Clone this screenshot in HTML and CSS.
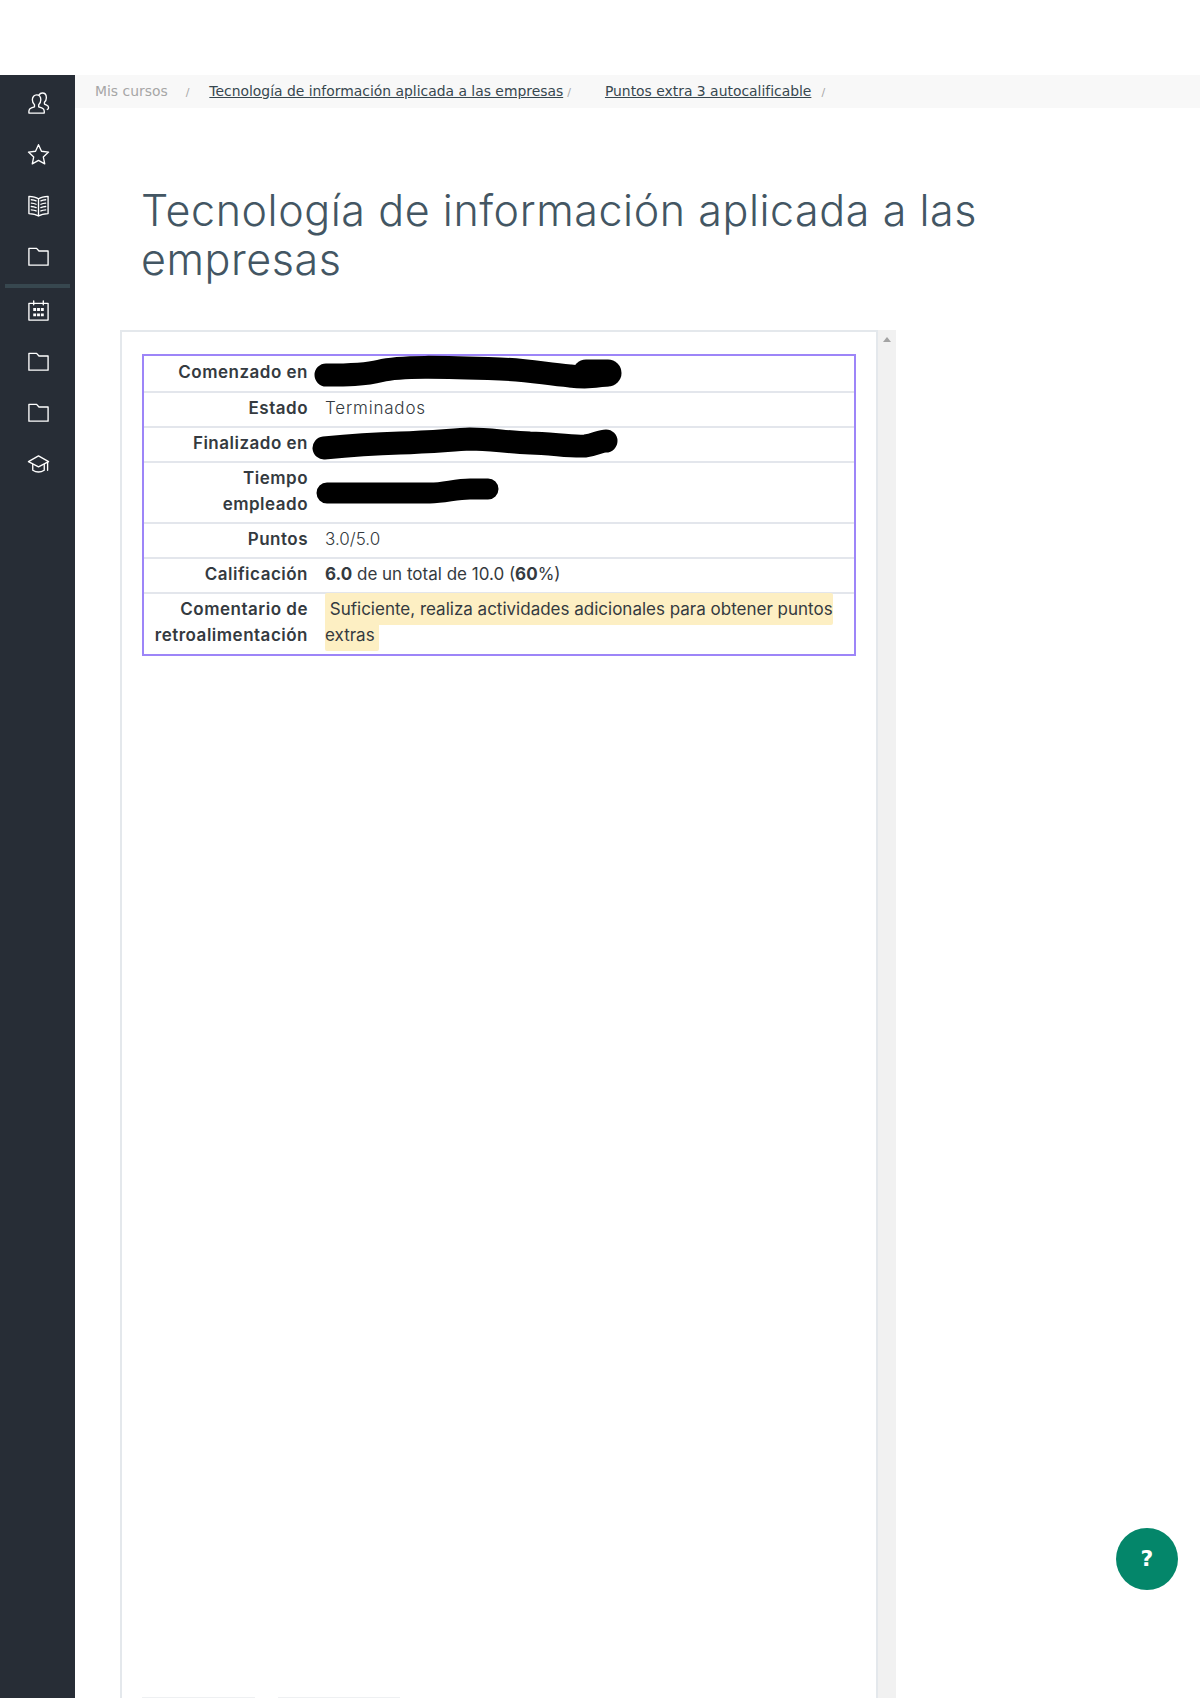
FILE: index.html
```html
<!DOCTYPE html>
<html lang="es">
<head>
<meta charset="utf-8">
<title>Tecnología de información aplicada a las empresas</title>
<link rel="stylesheet" href="styles.css">
</head>
<body>
<div class="topbar"></div>
<div class="shell">
  <nav class="sidebar">
    <div class="navgroup first">
      <a class="navitem"><svg class="ico" viewBox="0 0 24 24"><path d="M2 22v-2.2c0-1.6 1-2.6 2.6-3.2l3.2-1.2v-2.2c-1.5-1.2-2.2-3-2.2-5C5.600 4.900 7.600 3 10 3s4.400 1.900 4.400 5.200c0 2-.7 3.800-2.200 5v2.200l3.200 1.200c1.600.6 2.600 1.600 2.600 3.200V22z"/><path d="M12.500 3.200C13.200 1.900 14.500 1 16 1c2.300 0 4.200 1.800 4.200 4.900 0 1.900-.7 3.500-2 4.700v2l2.300 1c1.300.6 2 1.500 2 2.800 0 1-.5 1.600-1.300 1.800"/></svg></a>
      <a class="navitem"><svg class="ico" viewBox="0 0 24 24"><path d="M12 1.800l3.100 6.800 7.400.9-5.500 5 1.500 7.300-6.500-3.700-6.500 3.700L7 14.500l-5.500-5 7.400-.9z"/></svg></a>
      <a class="navitem"><svg class="ico" viewBox="0 0 24 24"><path d="M12 5C9.500 3.400 6 2.600 2 2.400v18c4 .2 7.500 1 10 2.600 2.500-1.600 6-2.400 10-2.600v-18C18 2.600 14.500 3.400 12 5zM12 5v18"/><path d="M4.500 6c1.800.1 3.600.5 5 1.200M4.500 9.500c1.800.1 3.600.5 5 1.200M4.500 13c1.800.1 3.600.5 5 1.200M4.500 16.500c1.800.1 3.600.5 5 1.200M19.500 6c-1.800.1-3.600.5-5 1.200M19.500 9.500c-1.800.1-3.600.5-5 1.200M19.500 13c-1.800.1-3.600.5-5 1.200M19.500 16.500c-1.800.1-3.600.5-5 1.200"/></svg></a>
      <a class="navitem"><svg class="ico" viewBox="0 0 24 24"><path d="M2 3.500h8l2.500 2.800H22V21H2z"/></svg></a>
    </div>
    <div class="navsep"></div>
    <div class="navgroup second">
      <a class="navitem"><svg class="ico" viewBox="0 0 24 24"><path d="M2 4.500h20V22H2zM7 2v4M17 2v4"/><path class="dots" d="M6.500 9.500h3v3h-3zM10.500 9.500h3v3h-3zM14.500 9.500h3v3h-3zM6.500 15h3v3h-3zM10.500 15h3v3h-3zM14.500 15h3v3h-3z"/></svg></a>
      <a class="navitem"><svg class="ico" viewBox="0 0 24 24"><path d="M2 3.500h8l2.500 2.800H22V21H2z"/></svg></a>
      <a class="navitem"><svg class="ico" viewBox="0 0 24 24"><path d="M2 3.500h8l2.500 2.800H22V21H2z"/></svg></a>
      <a class="navitem"><svg class="ico" viewBox="0 0 24 24"><path d="M12 4L1.500 10 12 15.500 22.500 10z"/><path d="M6 13v6c3.500 2.200 8.500 2.200 12 0v-6M21.500 10.500V19"/></svg></a>
    </div>
  </nav>
  <main class="main">
    <div class="crumbs">
      <span class="crumb muted">Mis cursos</span>
      <span class="slash s1">/</span>
      <a class="crumb link">Tecnología de información aplicada a las empresas</a>
      <span class="slash s2">/</span>
      <a class="crumb link l2">Puntos extra 3 autocalificable</a>
      <span class="slash s3">/</span>
    </div>
    <h1 class="title">Tecnología de información aplicada a las empresas</h1>
    <div class="framewrap">
      <div class="frame">
        <div class="summary">
          <table class="review">
            <tr class="r-first"><th>Comenzado en</th><td></td></tr>
            <tr><th>Estado</th><td class="light wide">Terminados</td></tr>
            <tr><th>Finalizado en</th><td></td></tr>
            <tr class="r-tall"><th>Tiempo<br>empleado</th><td></td></tr>
            <tr><th>Puntos</th><td class="light">3.0/5.0</td></tr>
            <tr><th>Calificación</th><td><b>6.0</b> de un total de 10.0 (<b>60</b>%)</td></tr>
            <tr class="r-last"><th>Comentario de<br>retroalimentación</th><td><span class="note">&nbsp;Suficiente, realiza actividades adicionales para obtener puntos<br>extras&nbsp;</span></td></tr>
          </table>
          <svg class="redact" viewBox="142 354 713 301" aria-hidden="true">
            <path class="s" d="M326 376C345 376 365 376 380 372C400 367 440 368 500 370C530 371 545 375 570 377C585 379 595 378 606 376"/>
            <path class="b" d="M586 374h22"/>
            <path class="s" d="M324 449C345 447 370 445 400 444C430 443 450 441 470 440C490 440 505 443 530 444C550 444 570 448 585 447C595 446 600 442 606 442"/>
            <path class="t" d="M327 494H430C445 494 455 490 470 490H488"/>
          </svg>
        </div>
        <div class="bottomrow"><span class="stub one"></span><span class="stub two"></span></div>
      </div>
      <div class="scrollbar"><span class="arrow"></span></div>
    </div>
  </main>
</div>
<button class="help" type="button">?</button>
</body>
</html>
```
FILE: styles.css
```css
* { box-sizing: border-box; }
html, body { margin: 0; padding: 0; height: 1698px; overflow: hidden; background: #fff; }
body { font-family: "Inter", "Liberation Sans", sans-serif; color: #373a3c; }

.topbar { height: 75px; background: #fff; }
.shell { display: flex; height: 1623px; }

.sidebar { width: 75px; flex: none; background: #272d36; padding-top: 4px; }
.navgroup { display: flex; flex-direction: column; gap: 3px; }
.navgroup.second { margin-top: -1.500px; }
.navitem { height: 48px; display: flex; align-items: center; justify-content: center; padding-left: 2px; }
.ico { width: 23px; height: 23px; fill: none; stroke: #fff; stroke-width: 1.400; stroke-linejoin: round; stroke-linecap: round; }
.ico .dots { fill: #fff; stroke: none; }
.navsep { height: 4px; margin: 4px 5px 0; background: #37474f; }

.main { flex: 1; min-width: 0; }
.crumbs { height: 33px; background: #f8f8f8; display: flex; align-items: center; padding: 0 0 2px 20px; font-family: "DejaVu Sans", sans-serif; font-size: 13.900px; }
.crumb.muted { color: #a6a6a6; }
.crumb.link { color: #37474f; text-decoration: underline; }
.slash { color: #a6a6a6; font-size: 11px; padding-top: 3px; }
.s1 { margin: 0 20px 0 18px; }
.s2 { margin: 0 34px 0 4px; }
.s3 { margin-left: 10px; }

.title { margin: 78px 0 0 66px; max-width: 900px; font-weight: 300; font-size: 43px; line-height: 49px; color: #435663; letter-spacing: .57px; }

.framewrap { display: flex; width: 776px; height: 1380px; margin: 46px 0 0 45px; }
.frame { flex: 1; min-width: 0; border: 2px solid #e4e8ec; border-bottom: 0; padding: 22px 21px 0 20px; position: relative; }
.scrollbar { width: 18px; flex: none; background: #f1f1f1; padding-top: 7px; display: flex; justify-content: center; align-items: flex-start; }
.arrow { width: 0; height: 0; border-left: 4.500px solid transparent; border-right: 4.500px solid transparent; border-bottom: 5px solid #a3a3a3; }

.summary { position: relative; width: 714px; }
.review { width: 100%; border-collapse: separate; border-spacing: 0; border: 2px solid #9d85f8; font-size: 17px; line-height: 26px; table-layout: fixed; }
.review tr + tr th, .review tr + tr td { border-top: 2px solid #e3e6ec; }
.review th { width: 172px; padding: 2px 8px 5px 0; text-align: right; font-weight: 600; letter-spacing: .5px; vertical-align: top; color: #343a40; }
.review td { padding: 2px 0 5px 9px; font-weight: 400; vertical-align: top; color: #343a40; }
.review td.light { font-weight: 300; }
.review td.wide { letter-spacing: .8px; }
.review b { font-weight: 700; }
.review .r-first th, .review .r-first td { padding-top: 3px; padding-bottom: 6px; }
.review .r-tall th, .review .r-tall td { padding-top: 2px; padding-bottom: 5px; }
.review .r-last th, .review .r-last td { padding-top: 2px; padding-bottom: 6px; }
.note { background: #fdefc3; border-radius: 2px; padding: 6px 0; -webkit-box-decoration-break: clone; box-decoration-break: clone; }

.redact { position: absolute; left: 0; top: -1px; width: 713px; height: 301px; fill: none; stroke: #000; stroke-linecap: round; stroke-linejoin: round; }
.redact .s { stroke-width: 23px; }
.redact .b { stroke-width: 27px; }
.redact .t { stroke-width: 21px; }

.bottomrow { position: absolute; left: 20px; right: 0; bottom: 12px; display: flex; gap: 23px; }
.stub { height: 1px; background: #eef0f2; display: block; }
.stub.one { width: 113px; }
.stub.two { width: 122px; }

.help { position: fixed; left: 1116px; top: 1528px; width: 62px; height: 62px; border: 0; border-radius: 50%; background: #04866a; color: #fff; font-family: "DejaVu Sans", sans-serif; font-weight: 700; font-size: 22px; line-height: 62px; padding: 0; text-align: center; }
```
